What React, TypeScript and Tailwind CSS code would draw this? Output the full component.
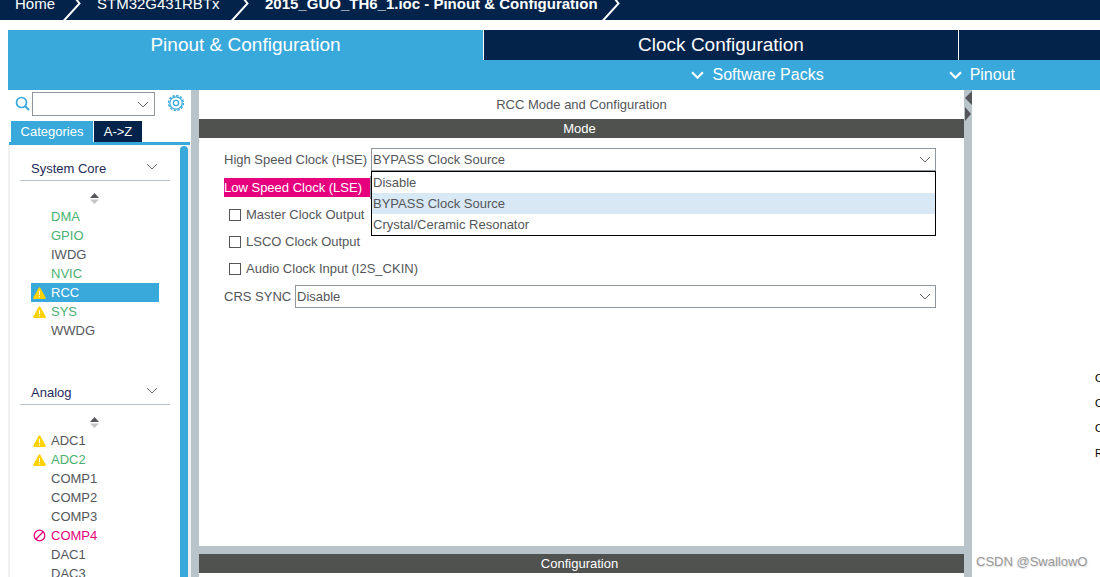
import { useState } from "react";

type Status = "none" | "enabled" | "conflict";

interface Peripheral {
  name: string;
  status?: Status;
  icon?: "warning" | "blocked";
}

const groups: { title: string; items: Peripheral[] }[] = [
  {
    title: "System Core",
    items: [
      { name: "DMA", status: "enabled" },
      { name: "GPIO", status: "enabled" },
      { name: "IWDG" },
      { name: "NVIC", status: "enabled" },
      { name: "RCC", icon: "warning" },
      { name: "SYS", status: "enabled", icon: "warning" },
      { name: "WWDG" },
    ],
  },
  {
    title: "Analog",
    items: [
      { name: "ADC1", icon: "warning" },
      { name: "ADC2", status: "enabled", icon: "warning" },
      { name: "COMP1" },
      { name: "COMP2" },
      { name: "COMP3" },
      { name: "COMP4", status: "conflict", icon: "blocked" },
      { name: "DAC1" },
      { name: "DAC3" },
    ],
  },
];

const statusColor: Record<Status, string> = {
  none: "text-[#54565a]",
  enabled: "text-[#49b170]",
  conflict: "text-[#e6007e]",
};

const clockSources = ["Disable", "BYPASS Clock Source", "Crystal/Ceramic Resonator"];

function Chevron({ className }: { className: string }) {
  return (
    <svg viewBox="0 0 12 7" className={className} fill="none" stroke="currentColor" aria-hidden="true">
      <path d="M1 1 6 6 11 1" />
    </svg>
  );
}

function CrumbArrow() {
  return (
    <svg viewBox="0 0 18 20" className="h-5 w-[18px] shrink-0" fill="none" stroke="#fff" strokeWidth="2" aria-hidden="true">
      <path d="M13 -1 16.500 3.500 1 20.500" />
    </svg>
  );
}

function SearchIcon() {
  return (
    <svg viewBox="0 0 15 15" className="size-[15px]" fill="none" stroke="#39a9dc" aria-hidden="true">
      <circle cx="6.500" cy="6.500" r="5" strokeWidth="1.700" />
      <path d="M10 10 14 14" strokeWidth="2" />
    </svg>
  );
}

function GearIcon() {
  return (
    <svg viewBox="0 0 18 18" className="size-[18px]" fill="none" stroke="#39a9dc" aria-hidden="true">
      <circle cx="9" cy="9" r="6.200" strokeWidth="1.200" />
      <circle cx="9" cy="9" r="7.400" strokeWidth="1.500" strokeDasharray="2.300 1.575" />
      <circle cx="9" cy="9" r="2.600" strokeWidth="1.300" />
    </svg>
  );
}

function WarningIcon() {
  return (
    <svg viewBox="0 0 13 12" className="h-3 w-[13px]" aria-hidden="true">
      <path d="M6.500 1.300 11.900 11H1.100Z" fill="#ffd200" stroke="#ffd200" strokeWidth="1.800" strokeLinejoin="round" />
      <path d="M6.500 4v4M6.500 9.200v1.200" stroke="#fff" strokeWidth="1" />
    </svg>
  );
}

function BlockedIcon() {
  return (
    <svg viewBox="0 0 13 13" className="size-[13px]" fill="none" stroke="#e6007e" strokeWidth="1.300" aria-hidden="true">
      <circle cx="6.500" cy="6.500" r="5.300" />
      <path d="M2.800 10.200 10.200 2.800" />
    </svg>
  );
}

function SelectBox({ id, options, initial }: { id: string; options: string[]; initial: string }) {
  const [value, setValue] = useState(initial);
  return (
    <div className="relative flex-1">
      <select
        id={id}
        value={value}
        onChange={(e) => setValue(e.target.value)}
        className="block h-[23px] w-full appearance-none border border-[#8f969c] bg-white pl-px text-[13px] text-[#54565a] outline-none"
      >
        {options.map((option) => (
          <option key={option}>{option}</option>
        ))}
      </select>
      <Chevron className="pointer-events-none absolute top-2 right-[5px] h-[7px] w-3 text-[#666]" />
    </div>
  );
}

function CheckRow({ label }: { label: string }) {
  return (
    <label className="flex h-[22px] items-center gap-[5px] pl-[5px]">
      <input type="checkbox" className="size-3 appearance-none border border-[#54565a] bg-white checked:bg-[#39a9dc]" />
      {label}
    </label>
  );
}

function Header() {
  return (
    <nav className="flex h-5 shrink-0 items-start overflow-hidden bg-[#03234b] pl-[15px] text-[15px] leading-2 whitespace-nowrap text-white">
      <a href="#home" className="w-12">Home</a>
      <CrumbArrow />
      <a href="#chip" className="ml-4 w-[134px]">STM32G431RBTx</a>
      <CrumbArrow />
      <a href="#project" className="mr-1 ml-4 font-bold">2015_GUO_TH6_1.ioc - Pinout &amp; Configuration</a>
      <CrumbArrow />
    </nav>
  );
}

function MainTabs() {
  return (
    <div className="mt-2.5 ml-2 shrink-0 bg-[#39a9dc] text-white">
      <div className="flex h-[30px] text-[19px]">
        <button className="w-[43.500%]">Pinout &amp; Configuration</button>
        <button className="w-[43.500%] border-l border-white bg-[#03234b]">Clock Configuration</button>
        <button className="flex-1 border-l border-white bg-[#03234b]" aria-label="Project Manager" />
      </div>
      <div className="flex h-[30px] items-center justify-end gap-[125px] pr-[85px] text-[16px]">
        <button className="flex items-center gap-2">
          <Chevron className="h-2 w-[13px] stroke-2" />
          Software Packs
        </button>
        <button className="flex items-center gap-2">
          <Chevron className="h-2 w-[13px] stroke-2" />
          Pinout
        </button>
      </div>
    </div>
  );
}

function PeripheralRow({ item, selected, onSelect }: { item: Peripheral; selected: boolean; onSelect: () => void }) {
  const color = selected ? "bg-[#39a9dc] text-white" : statusColor[item.status ?? "none"];
  return (
    <li>
      <button onClick={onSelect} className={`flex h-[19px] w-32 items-center text-left ${color}`}>
        <span className="w-5 pl-0.5">
          {item.icon === "warning" && <WarningIcon />}
          {item.icon === "blocked" && <BlockedIcon />}
        </span>
        {item.name}
      </button>
    </li>
  );
}

function Sidebar() {
  const [selected, setSelected] = useState("RCC");
  return (
    <aside className="flex w-[183px] shrink-0 flex-col text-[13px]">
      <div className="flex h-[31px] shrink-0 items-start pt-0.5 pl-1.5">
        <label htmlFor="search" className="w-[18px] pt-1 pl-px">
          <SearchIcon />
        </label>
        <div className="relative">
          <select id="search" aria-label="Search" className="block h-6 w-[123px] appearance-none border border-[#8f969c] bg-white outline-none">
            <option></option>
          </select>
          <Chevron className="pointer-events-none absolute top-[9px] right-1.5 h-[7px] w-3 text-[#666]" />
        </div>
        <button aria-label="Settings" className="ml-3 pt-0.5">
          <GearIcon />
        </button>
      </div>
      <div className="mx-px flex h-6 shrink-0 gap-px border-b-3 border-[#39a9dc] pl-0.5 text-white">
        <button className="w-[82px] bg-[#39a9dc]">Categories</button>
        <button className="w-12 bg-[#03234b]">A-&gt;Z</button>
      </div>
      <div className="flex min-h-0 flex-1 border-r-3 border-l-2 border-[#f0f0f0]">
        <div className="flex-1 overflow-hidden pt-[11px] pl-2.5">
          {groups.map((group) => (
            <section key={group.title} className="pb-10">
              <button className="flex h-[25px] w-[150px] items-center justify-between border-b border-[#b8c3ca] pt-0.5 pr-3 pl-[11px] text-[#1f2a5c]">
                {group.title}
                <Chevron className="mb-1.5 h-[7px] w-3 text-[#666]" />
              </button>
              <div className="flex h-[26px] w-[149px] items-center justify-center pt-2">
                <svg viewBox="0 0 9 11" className="h-[11px] w-[9px]" aria-hidden="true">
                  <path d="M0 5 4.500 0 9 5Z" fill="#54565a" />
                  <path d="M0 6.500h9L4.500 11Z" fill="#c4c4c4" />
                </svg>
              </div>
              <ul className="pl-[11px]">
                {group.items.map((item) => (
                  <PeripheralRow
                    key={item.name}
                    item={item}
                    selected={selected === item.name}
                    onSelect={() => setSelected(item.name)}
                  />
                ))}
              </ul>
            </section>
          ))}
        </div>
        <div className="mt-px w-2 rounded-t-full bg-[#39a9dc]" />
      </div>
    </aside>
  );
}

function PanelTitle({ children }: { children: string }) {
  return (
    <h2 className="h-[19px] shrink-0 bg-[#505250] pr-1 text-center leading-[19px] text-white">{children}</h2>
  );
}

function ModePanel() {
  const [source, setSource] = useState("BYPASS Clock Source");
  return (
    <main className="flex min-w-0 flex-1 flex-col pb-1 text-[13px] text-[#54565a]">
      <h1 className="flex h-[29px] shrink-0 items-center justify-center">RCC Mode and Configuration</h1>
      <PanelTitle>Mode</PanelTitle>
      <form className="flex min-h-0 flex-1 flex-col gap-[5px] pt-2.5 pr-7 pl-[25px] whitespace-nowrap">
        <div className="flex items-center">
          <label htmlFor="hse" className="w-[147px]">High Speed Clock (HSE)</label>
          <div className="relative flex flex-1">
            <SelectBox key={source} id="hse" options={clockSources} initial={source} />
            <ul role="listbox" aria-label="High Speed Clock (HSE)" className="absolute inset-x-0 top-full z-10 border border-black bg-white">
              {clockSources.map((option) => (
                <li
                  key={option}
                  role="option"
                  aria-selected={option === source}
                  onClick={() => setSource(option)}
                  className="h-[21px] pl-px leading-[21px] aria-selected:bg-[#d9e8f5]"
                >
                  {option}
                </li>
              ))}
            </ul>
          </div>
        </div>
        <div className="flex items-center">
          <label htmlFor="lse" className="w-[146px] bg-[#e6007e] leading-[19px] text-white">Low Speed Clock (LSE)</label>
          <SelectBox id="lse" options={["Disable"]} initial="Disable" />
        </div>
        <CheckRow label="Master Clock Output" />
        <CheckRow label="LSCO Clock Output" />
        <CheckRow label="Audio Clock Input (I2S_CKIN)" />
        <div className="flex items-center">
          <label htmlFor="crs" className="w-[71px]">CRS SYNC</label>
          <SelectBox id="crs" options={["Disable"]} initial="Disable" />
        </div>
      </form>
      <div className="h-2 shrink-0 bg-[#b8c3ca]" />
      <PanelTitle>Configuration</PanelTitle>
    </main>
  );
}

function PinoutView() {
  return (
    <section className="relative w-32 shrink-0 overflow-hidden">
      <ul className="pt-[276px] pl-[123px] text-[11px] leading-[25px] text-black">
        <li>O</li>
        <li>O</li>
        <li>O</li>
        <li>R</li>
      </ul>
      <p className="absolute bottom-1.5 left-1 text-[13px] leading-[18px] whitespace-nowrap text-[#999] [text-shadow:1px_1px_1px_#ddd]">
        CSDN @SwallowO
      </p>
    </section>
  );
}

export default function App() {
  return (
    <div className="flex h-screen flex-col overflow-hidden bg-white font-['Liberation_Sans',Arial,sans-serif]">
      <Header />
      <MainTabs />
      <div className="flex min-h-0 flex-1 pl-2">
        <Sidebar />
        <div className="w-2 shrink-0 bg-[#b8c3ca]" />
        <ModePanel />
        <div className="w-2 shrink-0 bg-[#b8c3ca]">
          <svg viewBox="0 0 8 32" className="h-8 w-2" fill="#54565a" aria-hidden="true">
            <path d="M8 1v14L1 8ZM1 17v14l6-7Z" />
          </svg>
        </div>
        <PinoutView />
      </div>
    </div>
  );
}
